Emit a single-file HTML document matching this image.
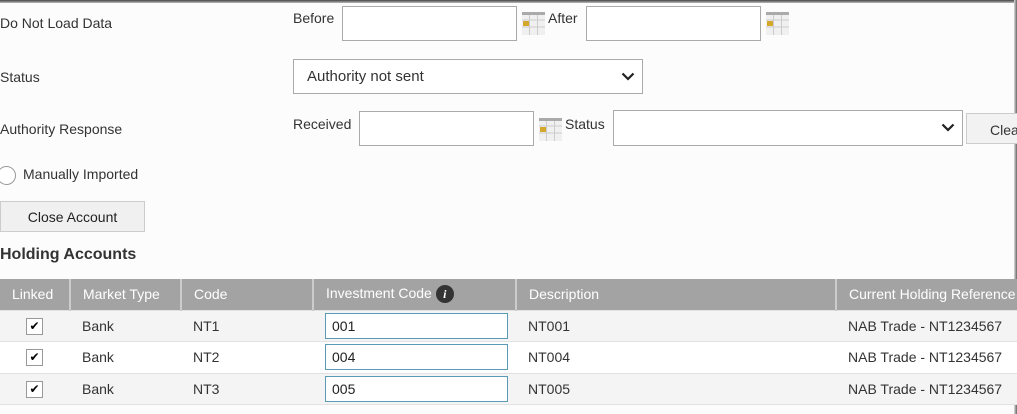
<!DOCTYPE html>
<html><head><style>
*{box-sizing:border-box;margin:0;padding:0}
body{width:1017px;height:414px;overflow:hidden;background:#fcfcfc;font-family:"Liberation Sans",sans-serif;font-size:14px;color:#333;position:relative}
.a{position:absolute;white-space:nowrap}
.inp{position:absolute;border:1px solid #aaa;background:#fff}
.cal{position:absolute;width:23px;height:23px}
.chev{position:absolute;width:14px;height:9px}
th{background:#a3a3a3;color:#fff;font-weight:normal;text-align:left;height:31px;padding-left:12px;border-right:2px solid #ccc;font-size:14px;vertical-align:middle}
td{height:31.5px;padding-left:12px;border-top:1px solid #e2e2e2}
table{position:absolute;left:0;top:279px;width:1030px;border-collapse:collapse}
tr.g td{background:#f4f4f4}
tr.w td{background:#fff}
.cb{display:inline-block;width:17px;height:17px;border:1px solid #999;background:#fff;font-size:12px;line-height:15px;text-align:center;color:#000;vertical-align:middle}
.ci{display:inline-block;width:183px;height:26px;border:1px solid #5a9ab5;background:#fff;padding-left:6px;line-height:24px;color:#222}
</style></head><body>
<div class="a" style="left:0;top:0;width:1017px;height:3px;background:linear-gradient(#444,#bbb)"></div>
<div class="a" style="right:0;top:0;width:3px;height:414px;background:linear-gradient(90deg,#ddd,#666)"></div>

<div class="a" style="left:0;top:15px">Do Not Load Data</div>
<div class="a" style="left:293px;top:10px">Before</div>
<div class="inp" style="left:342px;top:6px;width:175px;height:35px"></div>
<svg class="cal" style="left:522px;top:12px" viewBox="0 0 23 23"><rect x="0" y="0" width="23" height="23" fill="#f0f0f0"/><rect x="0" y="0" width="23" height="3" fill="#aaa"/><path d="M0 8H23M0 15H23M7.5 3V23M15.5 3V23" stroke="#ccc" fill="none"/><rect x="1" y="9" width="6" height="5" fill="#d4a82a"/></svg>
<div class="a" style="left:548px;top:10px">After</div>
<div class="inp" style="left:586px;top:6px;width:175px;height:35px"></div>
<svg class="cal" style="left:766px;top:12px" viewBox="0 0 23 23"><rect x="0" y="0" width="23" height="23" fill="#f0f0f0"/><rect x="0" y="0" width="23" height="3" fill="#aaa"/><path d="M0 8H23M0 15H23M7.5 3V23M15.5 3V23" stroke="#ccc" fill="none"/><rect x="1" y="9" width="6" height="5" fill="#d4a82a"/></svg>

<div class="a" style="left:0;top:69px">Status</div>
<div class="inp" style="left:293px;top:59px;width:350px;height:35px;padding:8px 0 0 13px;font-size:15px">Authority not sent</div>
<svg class="chev" style="left:621px;top:72px" viewBox="0 0 14 9"><path d="M1.5 1.5L7 7L12.5 1.5" stroke="#222" stroke-width="2.2" fill="none"/></svg>

<div class="a" style="left:0;top:121px">Authority Response</div>
<div class="a" style="left:293px;top:116px">Received</div>
<div class="inp" style="left:359px;top:111px;width:175px;height:35px"></div>
<svg class="cal" style="left:539px;top:118px" viewBox="0 0 23 23"><rect x="0" y="0" width="23" height="23" fill="#f0f0f0"/><rect x="0" y="0" width="23" height="3" fill="#aaa"/><path d="M0 8H23M0 15H23M7.5 3V23M15.5 3V23" stroke="#ccc" fill="none"/><rect x="1" y="9" width="6" height="5" fill="#d4a82a"/></svg>
<div class="a" style="left:565px;top:116px">Status</div>
<div class="inp" style="left:613px;top:110px;width:350px;height:36px"></div>
<svg class="chev" style="left:941px;top:123px" viewBox="0 0 14 9"><path d="M1.5 1.5L7 7L12.5 1.5" stroke="#222" stroke-width="2.2" fill="none"/></svg>
<div class="a" style="left:966px;top:113px;width:60px;height:31px;border:1px solid #ccc;background:#f2f2f2;padding:8px 0 0 23px">Clear</div>

<div class="a" style="left:-3px;top:166px;width:19px;height:19px;border:1px solid #999;border-radius:50%;background:#fff"></div>
<div class="a" style="left:23px;top:166px">Manually Imported</div>
<div class="a" style="left:0;top:201px;width:145px;height:31px;border:1px solid #ccc;background:#f0f0f0;padding-top:7px;text-align:center;color:#222">Close Account</div>

<div class="a" style="left:0;top:246px;font-size:16px;font-weight:bold;color:#333">Holding Accounts</div>

<table>
<tr><th style="width:70px">Linked</th><th style="width:111px">Market Type</th><th style="width:132px">Code</th><th style="width:203px">Investment Code <span style="display:inline-block;width:18px;height:18px;border-radius:50%;background:#333;color:#fff;font-size:12px;font-weight:bold;font-style:italic;text-align:center;line-height:18px;vertical-align:middle;font-family:'Liberation Serif',serif">i</span></th><th style="width:320px">Description</th><th>Current Holding Reference</th></tr>
<tr class="g"><td style="padding-left:26px"><span class="cb">✔</span></td><td>Bank</td><td>NT1</td><td><span class="ci">001</span></td><td>NT001</td><td>NAB Trade - NT1234567</td></tr>
<tr class="w"><td style="padding-left:26px"><span class="cb">✔</span></td><td>Bank</td><td>NT2</td><td><span class="ci">004</span></td><td>NT004</td><td>NAB Trade - NT1234567</td></tr>
<tr class="g"><td style="padding-left:26px;border-bottom:1px solid #e2e2e2"><span class="cb">✔</span></td><td style="border-bottom:1px solid #e2e2e2">Bank</td><td style="border-bottom:1px solid #e2e2e2">NT3</td><td style="border-bottom:1px solid #e2e2e2"><span class="ci">005</span></td><td style="border-bottom:1px solid #e2e2e2">NT005</td><td style="border-bottom:1px solid #e2e2e2">NAB Trade - NT1234567</td></tr>
</table>
</body></html>
